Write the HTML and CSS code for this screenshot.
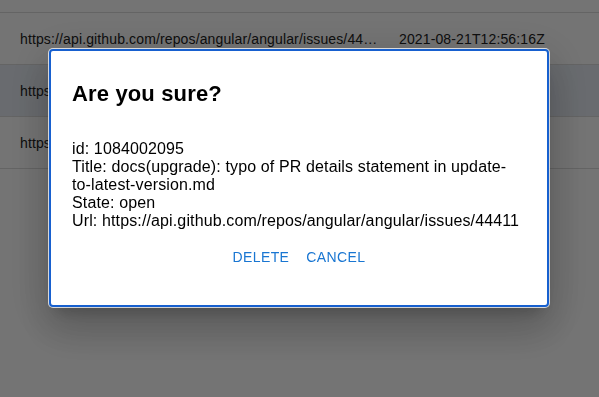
FILE: index.html
```html
<!DOCTYPE html>
<html lang="en">
<head>
<meta charset="utf-8">
<title>Issues</title>
<link rel="stylesheet" href="styles.css">
</head>
<body>
<div class="table">
  <div class="row">
    <span class="url">https://api.github.com/repos/angular/angular/issues/44411</span>
    <span class="date">2021-08-21T12:56:16Z</span>
  </div>
  <div class="row row-hover">
    <span class="url">https://api.github.com/repos/angular/angular/issues/44410</span>
    <span class="date">2021-08-21T10:12:03Z</span>
  </div>
  <div class="row">
    <span class="url">https://api.github.com/repos/angular/angular/issues/44409</span>
    <span class="date">2021-08-20T22:41:57Z</span>
  </div>
</div>

<div class="backdrop">
  <div class="dialog" role="dialog" aria-labelledby="dlg-title">
    <h2 class="dialog-title" id="dlg-title">Are you sure?</h2>
    <div class="dialog-body">
      <div>id: 1084002095</div>
      <div>Title: docs(upgrade): typo of PR details statement in update-to-latest-version.md</div>
      <div>State: open</div>
      <div>Url: https://api.github.com/repos/angular/angular/issues/44411</div>
    </div>
    <div class="dialog-actions">
      <button class="btn" type="button">Delete</button>
      <button class="btn" type="button">Cancel</button>
    </div>
  </div>
</div>
</body>
</html>
```

FILE: styles.css
```css
html, body {
  margin: 0;
  padding: 0;
}

body {
  background: #ffffff;
  font-family: "Liberation Sans", Arial, sans-serif;
  color: #222222;
  width: 599px;
  height: 397px;
  overflow: hidden;
}

.table {
  margin-top: 12px;
  border-top: 1px solid #dcdcdc;
}

.row {
  display: grid;
  grid-template-columns: 360px 1fr;
  column-gap: 19px;
  align-items: center;
  height: 51px;
  padding-left: 20px;
  border-bottom: 1px solid #dcdcdc;
  font-size: 14px;
  letter-spacing: 0.13px;
}

.row-hover {
  background: #e7ecf4;
}

.url {
  white-space: nowrap;
  overflow: hidden;
  text-overflow: ellipsis;
}

.date {
  white-space: nowrap;
}

.backdrop {
  position: fixed;
  inset: 0;
  background: rgba(0, 0, 0, 0.545);
  display: flex;
  flex-direction: column;
  align-items: flex-start;
  padding: 49px 0 0 49px;
}

.dialog {
  box-sizing: border-box;
  width: 500px;
  background: #ffffff;
  border: 2px solid #1760cf;
  border-radius: 4px;
  padding: 30px 26px 30px 21px;
  color: #000000;
  box-shadow:
    0 0 0 1px rgba(255, 255, 255, 0.75),
    0 11px 15px -7px rgba(0, 0, 0, 0.2),
    0 24px 38px 3px rgba(0, 0, 0, 0.14),
    0 9px 46px 8px rgba(0, 0, 0, 0.12);
}

.dialog-title {
  margin: 0;
  font-size: 22px;
  line-height: 25px;
  font-weight: bold;
  letter-spacing: 0.15px;
}

.dialog-body {
  margin-top: 34px;
  font-size: 16px;
  line-height: 18px;
  letter-spacing: 0.13px;
}

.dialog-actions {
  margin-top: 9px;
  display: flex;
  justify-content: center;
  gap: 1px;
  padding-left: 5px;
}

.btn {
  background: none;
  border: 0;
  padding: 6px 8px;
  min-width: 64px;
  height: 36px;
  font-family: "Liberation Sans", Arial, sans-serif;
  font-size: 14px;
  line-height: 24px;
  letter-spacing: 0.4px;
  text-transform: uppercase;
  color: #1976d2;
  cursor: pointer;
}
```
